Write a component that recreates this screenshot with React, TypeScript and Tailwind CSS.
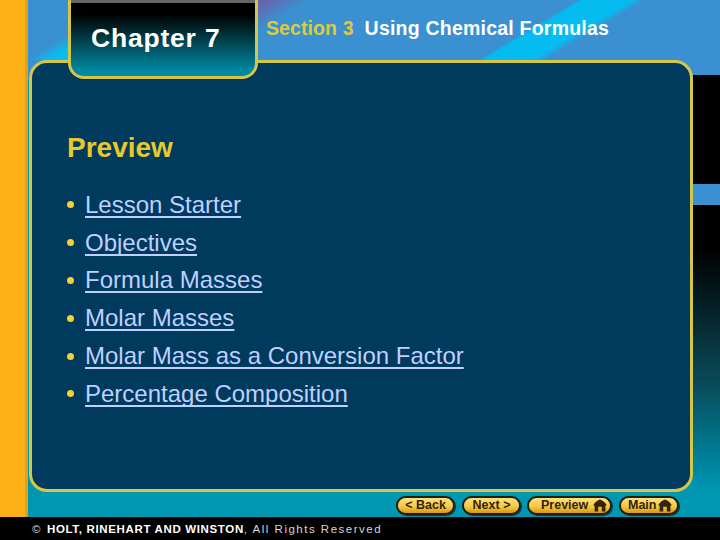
import React from "react";

const items = [
  "Lesson Starter",
  "Objectives",
  "Formula Masses",
  "Molar Masses",
  "Molar Mass as a Conversion Factor",
  "Percentage Composition",
];

function House() {
  return (
    <svg width="14" height="13" viewBox="0 0 14 13" className="shrink-0">
      <path d="M7 0.5 C9 1.2 12.5 3.5 13.8 6.2 L12.4 6.8 L12.4 12.5 L8.8 12.5 L8.8 7.8 L5.2 7.8 L5.2 12.5 L1.6 12.5 L1.6 6.8 L0.2 6.2 C1.5 3.5 5 1.2 7 0.5 Z" fill="#33240a" />
    </svg>
  );
}

function NavButton({ label, width, home, pad }: { label: string; width: string; home?: boolean; pad: string }) {
  return (
    <div className={`${width} h-[19px] rounded-full border-2 border-[#221d10] bg-[linear-gradient(#fbe27c,#f6cb46_55%,#d59816)] flex items-center ${pad} text-[12.5px] font-bold text-[#33240a] shadow-[1px_1px_0_#0b3a44]`}>
      <span className="whitespace-nowrap">{label}</span>
      {home && <House />}
    </div>
  );
}

export default function App() {
  return (
    <div className="w-[720px] h-[540px] flex flex-col overflow-hidden font-['Liberation_Sans',Arial,sans-serif]">
      <div className="flex flex-1 min-h-0">
        <div className="w-[28px] shrink-0 bg-[#fdb117] border-r-[3px] border-[#dca320]" />
        <div className="flex-1 flex flex-col min-w-0">
          <header className="h-[60px] shrink-0 flex bg-[linear-gradient(149deg,#3a90d0_0,#3a90d0_50px,#0abcf0_62px,#0abcf0_80px,#6a63ae_115px,#6a63ae_122px,#3a90d0_145px,#3a90d0_283px,#06bbf0_286px,#06bbf0_311px,#3a90d0_318px)]">
            <div className="relative z-10 ml-[40px] w-[190px] h-[79px] shrink-0 rounded-b-[16px] border-[3px] border-t-0 border-[#d5c648] bg-[linear-gradient(#000_0,#000_14px,#00879f_70px,#008aa2_100%)] shadow-[0_1px_0_#06313f] flex flex-col overflow-hidden">
              <div className="h-[3px] bg-[#666] shrink-0" />
              <div className="pl-[20px] mt-[19px] text-[26.5px] leading-[32px] font-bold text-white tracking-[0.8px] whitespace-nowrap">Chapter 7</div>
            </div>
            <div className="ml-[8px] pt-[17px] text-[19.5px] leading-[22px] font-bold whitespace-nowrap flex">
              <span className="text-[#dfc93c] tracking-[0.1px]">Section 3</span>
              <span className="ml-[11px] text-white tracking-[0.22px]">Using Chemical Formulas</span>
            </div>
          </header>
          <div className="flex-1 min-h-0 flex bg-[linear-gradient(#3a90d0_0,#3a90d0_20px,#0097b2_20px)]">
            <main className="flex-1 min-w-0 ml-[1px] rounded-[18px] border-[3px] border-[#d5c648] bg-[#003a5c] pl-[35px] pt-[69px]">
              <h1 className="text-[28px] leading-[32px] font-bold text-[#e8c92c]">Preview</h1>
              <ul className="mt-[22px]">
                {items.map((t) => (
                  <li key={t} className="h-[37.8px] flex items-center text-[24px] text-[#bfcfff]">
                    <span className="w-[7px] h-[7px] rounded-full bg-[#f3d233] shrink-0" />
                    <span className="ml-[11px] underline decoration-2 underline-offset-[3px] [text-decoration-skip-ink:none] whitespace-nowrap">{t}</span>
                  </li>
                ))}
              </ul>
            </main>
            <div className="w-[27px] shrink-0 flex flex-col">
              <div className="h-[15px] shrink-0" />
              <div className="h-[109px] shrink-0 bg-black" />
              <div className="h-[21px] shrink-0 bg-[#3a90d0]" />
              <div className="flex-1 bg-[linear-gradient(#000_0,#000_15%,#0a4a58_62%,#007a92_85%,#0097b2_100%)]" />
            </div>
          </div>
          <nav className="h-[25px] shrink-0 bg-[#0097b2] flex items-start pt-[4px] pl-[368px]">
            <NavButton label="< Back" width="w-[59px]" pad="justify-center" />
            <div className="ml-[7px]"><NavButton label="Next >" width="w-[59px]" pad="justify-center" /></div>
            <div className="ml-[6px]"><NavButton label="Preview" width="w-[85px]" home pad="pl-[12px] gap-[5px]" /></div>
            <div className="ml-[7px]"><NavButton label="Main" width="w-[60px]" home pad="pl-[7px] gap-[2px]" /></div>
          </nav>
        </div>
      </div>
      <footer className="h-[23px] shrink-0 bg-black pl-[32px] pt-[2px] flex items-center text-[11.5px] text-[#d6d6d6] whitespace-nowrap tracking-[1.5px]">
        <span>©</span>
        <span className="ml-[5px] font-bold text-white tracking-[0.65px]">HOLT, RINEHART AND WINSTON</span>
        <span>, All Rights Reserved</span>
      </footer>
    </div>
  );
}
